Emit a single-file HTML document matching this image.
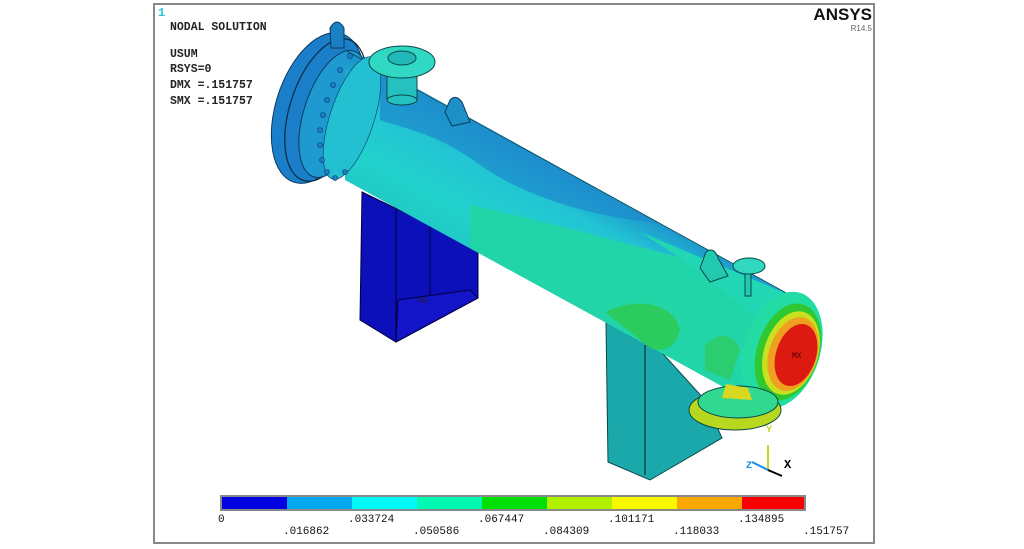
<!DOCTYPE html>
<html><head><meta charset="utf-8"><style>
body{margin:0;background:#fff;width:1024px;height:549px;overflow:hidden;font-family:"Liberation Mono",monospace}
svg{position:absolute;left:0;top:0}
</style></head><body>
<svg width="1024" height="549" viewBox="0 0 1024 549">
<defs>
<linearGradient id="sh" gradientUnits="userSpaceOnUse" x1="560" y1="168" x2="496" y2="290">
<stop offset="0" stop-color="#1c94cc"/><stop offset="0.25" stop-color="#22c4d4"/><stop offset="0.6" stop-color="#22d2cc"/><stop offset="1" stop-color="#20c4c0"/>
</linearGradient>
</defs>
<rect x="154" y="4" width="720" height="539" fill="#fff" stroke="#888" stroke-width="2"/>
<!-- left leg -->
<polygon points="362,192 478,248 478,298 396,342 360,320" fill="#0c10b8" stroke="#000040"/>
<line x1="396" y1="205" x2="396" y2="342" stroke="#000030"/>
<line x1="430" y1="225" x2="430" y2="300" stroke="#000040"/>
<polygon points="398,300 470,290 478,298 396,342" fill="#1414c8" stroke="#000040"/>
<text x="418" y="303" font-size="8" fill="#223">MN</text>
<!-- right leg -->
<polygon points="606,322 655,345 705,400 722,438 650,480 608,462" fill="#1aa8aa" stroke="#0a4848"/>
<line x1="645" y1="345" x2="645" y2="475" stroke="#0a4848" stroke-width="1.5"/>
<!-- flange -->
<ellipse cx="318" cy="108" rx="42" ry="78" transform="rotate(18 318 108)" fill="#1a7ec8" stroke="#0a3a60"/>
<ellipse cx="326" cy="110" rx="36" ry="74" transform="rotate(18 326 110)" fill="none" stroke="#0a2a40" stroke-width="1.2"/>
<ellipse cx="334" cy="114" rx="30" ry="66" transform="rotate(18 334 114)" fill="#1e9ad0" stroke="#0a3a60"/>
<!-- shell -->
<path d="M345,50 L790,295 L760,407 L345,180 Z" fill="url(#sh)"/>
<path d="M380,68 L660,223 C600,218 530,200 480,165 C440,135 410,130 380,120 Z" fill="#1e8ccc" opacity="0.75"/>
<path d="M470,205 C560,225 650,250 730,270 L790,295 L760,407 L470,248 Z" fill="#22d6a4" opacity="0.9"/>
<path d="M640,232 L790,295 L775,340 C740,300 700,270 640,232 Z" fill="#22d8b4"/>
<path d="M605,312 C640,295 675,305 680,330 C675,350 660,352 650,348 Z" fill="#30c84a" opacity="0.8"/>
<path d="M705,345 C720,330 735,335 740,350 L730,380 L705,370 Z" fill="#30c84a" opacity="0.6"/>
<path d="M345,50 L790,295" stroke="#0a4850" stroke-width="0.8"/>
<ellipse cx="352" cy="118" rx="22" ry="64" transform="rotate(18 352 118)" fill="#22c0d0" stroke="#0a3a60" stroke-width="0.6"/>
<g fill="#1a7ec8" stroke="#0a3a60" stroke-width="0.6">
<circle cx="350" cy="56" r="2.5"/><circle cx="340" cy="70" r="2.5"/><circle cx="333" cy="85" r="2.5"/><circle cx="327" cy="100" r="2.5"/><circle cx="323" cy="115" r="2.5"/><circle cx="320" cy="130" r="2.5"/><circle cx="320" cy="145" r="2.5"/><circle cx="322" cy="160" r="2.5"/><circle cx="327" cy="172" r="2.5"/><circle cx="335" cy="178" r="2.5"/><circle cx="345" cy="172" r="2.5"/>
</g>
<!-- far cap -->
<ellipse cx="782" cy="350" rx="38" ry="60" transform="rotate(18 782 350)" fill="#22dca4"/>
<ellipse cx="788" cy="352" rx="31" ry="50" transform="rotate(18 788 352)" fill="#30c830"/>
<ellipse cx="791" cy="353" rx="27" ry="43" transform="rotate(18 791 353)" fill="#c8e020"/>
<ellipse cx="793" cy="354" rx="24" ry="38" transform="rotate(18 793 354)" fill="#f0a020"/>
<ellipse cx="796" cy="355" rx="20" ry="32" transform="rotate(18 796 355)" fill="#dd1a10"/>
<text x="792" y="358" font-size="8" fill="#400">MX</text>
<!-- top nozzle -->
<rect x="387" y="62" width="30" height="38" fill="#25c0c0" stroke="#0a4848"/>
<ellipse cx="402" cy="100" rx="15" ry="5" fill="#25c0c0" stroke="#0a4848"/>
<ellipse cx="402" cy="62" rx="33" ry="16" fill="#30d8c4" stroke="#0a4848"/>
<ellipse cx="402" cy="58" rx="14" ry="7" fill="#22b8b8" stroke="#0a4848"/>
<!-- lugs -->
<path d="M330,28 Q337,16 344,28 L344,48 L331,48Z" fill="#1a80c4" stroke="#0a3a60"/>
<path d="M445,112 L450,100 Q456,94 462,102 L470,122 L452,126Z" fill="#1e90c8" stroke="#0a3a60"/>
<path d="M700,268 L706,252 Q714,246 718,258 L728,276 L710,282Z" fill="#22c8b0" stroke="#0a4848"/>
<rect x="745" y="268" width="6" height="28" fill="#22c8b0" stroke="#0a4848"/>
<ellipse cx="749" cy="266" rx="16" ry="8" fill="#30d8c0" stroke="#0a4848"/>
<!-- bottom nozzle -->
<ellipse cx="735" cy="410" rx="46" ry="20" fill="#b8d820" stroke="#0a4848"/>
<ellipse cx="738" cy="402" rx="40" ry="16" fill="#30d890" stroke="#0a4848"/>
<path d="M722,398 L726,384 L748,388 L752,400Z" fill="#d8d820"/>
<!-- triad -->
<line x1="768" y1="445" x2="768" y2="470" stroke="#c8d820" stroke-width="2"/>
<line x1="768" y1="470" x2="782" y2="476" stroke="#000" stroke-width="2"/>
<line x1="768" y1="470" x2="752" y2="462" stroke="#1a8ae0" stroke-width="2"/>
<text x="766" y="432" font-size="10" fill="#c8d820" font-weight="bold">Y</text>
<text x="784" y="468" font-size="12" fill="#000" font-weight="bold">X</text>
<text x="746" y="468" font-size="10" fill="#1a8ae0" font-weight="bold">Z</text>
<!-- legend -->
<rect x="220" y="495" width="586" height="16" fill="#888"/>
<rect x="222" y="497" width="65" height="12" fill="#0000e0"/>
<rect x="287" y="497" width="65" height="12" fill="#00a8f0"/>
<rect x="352" y="497" width="65" height="12" fill="#00f8f8"/>
<rect x="417" y="497" width="65" height="12" fill="#00f8b0"/>
<rect x="482" y="497" width="65" height="12" fill="#00e000"/>
<rect x="547" y="497" width="65" height="12" fill="#b0f000"/>
<rect x="612" y="497" width="65" height="12" fill="#f8f800"/>
<rect x="677" y="497" width="65" height="12" fill="#f8a800"/>
<rect x="742" y="497" width="62" height="12" fill="#f80000"/>
<g font-size="11" fill="#111">
<text x="218" y="522">0</text>
<text x="283" y="534">.016862</text>
<text x="348" y="522">.033724</text>
<text x="413" y="534">.050586</text>
<text x="478" y="522">.067447</text>
<text x="543" y="534">.084309</text>
<text x="608" y="522">.101171</text>
<text x="673" y="534">.118033</text>
<text x="738" y="522">.134895</text>
<text x="803" y="534">.151757</text>
</g>
<g font-size="11.5" font-weight="bold" fill="#222">
<text x="170" y="30">NODAL SOLUTION</text>
<text x="170" y="57">USUM</text>
<text x="170" y="72">RSYS=0</text>
<text x="170" y="88">DMX =.151757</text>
<text x="170" y="104">SMX =.151757</text>
</g>
<text x="158" y="16" font-size="12" fill="#22c8d8" font-weight="bold">1</text>
<text x="872" y="20" font-family="Liberation Sans,sans-serif" font-size="17" font-weight="bold" fill="#111" text-anchor="end">ANSYS</text>
<text x="872" y="31" font-family="Liberation Sans,sans-serif" font-size="8" fill="#666" text-anchor="end">R14.5</text>
</svg>
</body></html>
